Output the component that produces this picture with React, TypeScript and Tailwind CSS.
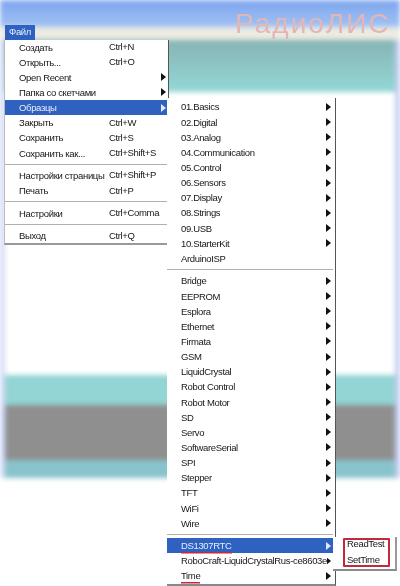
type Row =
  | { sep: true }
  | { label: string; keys?: string; sub?: boolean; active?: boolean; mark?: boolean }

const fileRows: Row[] = [
  { label: 'Создать', keys: 'Ctrl+N' },
  { label: 'Открыть...', keys: 'Ctrl+O' },
  { label: 'Open Recent', sub: true },
  { label: 'Папка со скетчами', sub: true },
  { label: 'Образцы', sub: true, active: true },
  { label: 'Закрыть', keys: 'Ctrl+W' },
  { label: 'Сохранить', keys: 'Ctrl+S' },
  { label: 'Сохранить как...', keys: 'Ctrl+Shift+S' },
  { sep: true },
  { label: 'Настройки страницы', keys: 'Ctrl+Shift+P' },
  { label: 'Печать', keys: 'Ctrl+P' },
  { sep: true },
  { label: 'Настройки', keys: 'Ctrl+Comma' },
  { sep: true },
  { label: 'Выход', keys: 'Ctrl+Q' },
]

const sub = (names: string[]): Row[] => names.map((label) => ({ label, sub: true }))

const exampleRows: Row[] = [
  ...sub([
    '01.Basics', '02.Digital', '03.Analog', '04.Communication', '05.Control', '06.Sensors',
    '07.Display', '08.Strings', '09.USB', '10.StarterKit',
  ]),
  { label: 'ArduinoISP' },
  { sep: true },
  ...sub([
    'Bridge', 'EEPROM', 'Esplora', 'Ethernet', 'Firmata', 'GSM', 'LiquidCrystal', 'Robot Control',
    'Robot Motor', 'SD', 'Servo', 'SoftwareSerial', 'SPI', 'Stepper', 'TFT', 'WiFi', 'Wire',
  ]),
  { sep: true },
  { label: 'DS1307RTC', sub: true, active: true, mark: true },
  { label: 'RoboCraft-LiquidCrystalRus-ce8603e', sub: true },
  { label: 'Time', sub: true, mark: true },
]

function MenuRow({ row }: { row: Row }) {
  if ('sep' in row) {
    return (
      <div className="flex h-[7.4px] items-center">
        <div className="h-px w-full bg-[#b4b2a8]" />
      </div>
    )
  }
  return (
    <div
      className={`flex h-[15.15px] items-center pl-[14px] pr-[2px] ${
        row.active ? 'bg-[#2f62c0] text-[#e6eefc]' : 'text-[#161616]'
      }`}
    >
      <span className={`${row.keys ? 'w-[90px]' : ''} shrink-0 whitespace-nowrap leading-[13px]`}>
        <span className={row.mark ? 'inline-block shadow-[0_1.5px_0_#c4283c]' : ''}>{row.label}</span>
      </span>
      {row.keys && <span className="whitespace-nowrap">{row.keys}</span>}
      {row.sub && (
        <svg className="ml-auto" width="5" height="8" viewBox="0 0 5 8">
          <polygon points="0,0 5,4 0,8" fill={row.active ? '#dfe9fb' : '#111'} />
        </svg>
      )}
    </div>
  )
}

export default function App() {
  return (
    <main className="relative h-[586px] w-[400px] overflow-hidden bg-white font-['Liberation_Sans',sans-serif] text-[9.5px] tracking-[-0.35px]">
      {/* blurred window behind the menus */}
      <div className="flex h-[478px] flex-col blur-[2.5px]">
        <div className="h-[27px] bg-gradient-to-b from-[#7da5ee] to-[#a2c2f4]" />
        <div className="h-[13px] bg-[#ecebe2]" />
        <div className="flex flex-1 flex-col border-x-[5px] border-l-[#d3dcf8] border-r-[#c3ccf2]">
          <div className="h-[52px] bg-gradient-to-b from-[#86b4b4] to-[#93d8d6]" />
          <div className="h-[283px] bg-white" />
          <div className="h-[30px] bg-[#93d4d4]" />
          <div className="h-[55px] bg-[#8f8f8f]" />
          <div className="flex-1 bg-[#89c3cb]" />
        </div>
      </div>

      <div className="absolute left-[235px] top-[8px] text-[28px] leading-[32px] tracking-[2px] text-[#e2b6b4] blur-[0.6px]">
        РадиоЛИС
      </div>

      <div className="absolute inset-0 blur-[0.3px]">
        <div className="absolute left-[5px] top-[25px] flex h-[15px] w-[30px] items-center justify-center bg-[#2f62c0] text-[#e6eefc]">
          Файл
        </div>

        <div className="absolute left-[4px] top-[39.5px] w-[165px] border-b-2 border-l border-r border-b-[#999] border-l-[#bbb] border-r-[#555] bg-white">
          {fileRows.map((row, i) => (
            <MenuRow key={i} row={row} />
          ))}
        </div>

        <div className="absolute left-[167px] top-[98px] w-[169px] border-b-2 border-r border-b-[#888] border-r-[#555] bg-white pr-[2px] pt-[1.4px]">
          {exampleRows.map((row, i) => (
            <MenuRow key={i} row={row} />
          ))}
        </div>

        <div className="absolute left-[333px] top-[537px] w-[64px] border-b-2 border-r-2 border-b-[#8b8b8b] border-r-[#999] bg-white pb-[2px] text-[#161616]">
          <div className="flex h-[15.15px] items-center pl-[14px]">ReadTest</div>
          <div className="flex h-[15.15px] items-center pl-[14px]">SetTime</div>
        </div>
        <div className="absolute left-[343px] top-[538px] h-[29px] w-[47px] rounded-[1px] border-2 border-[#c4283c]" />
      </div>
    </main>
  )
}
